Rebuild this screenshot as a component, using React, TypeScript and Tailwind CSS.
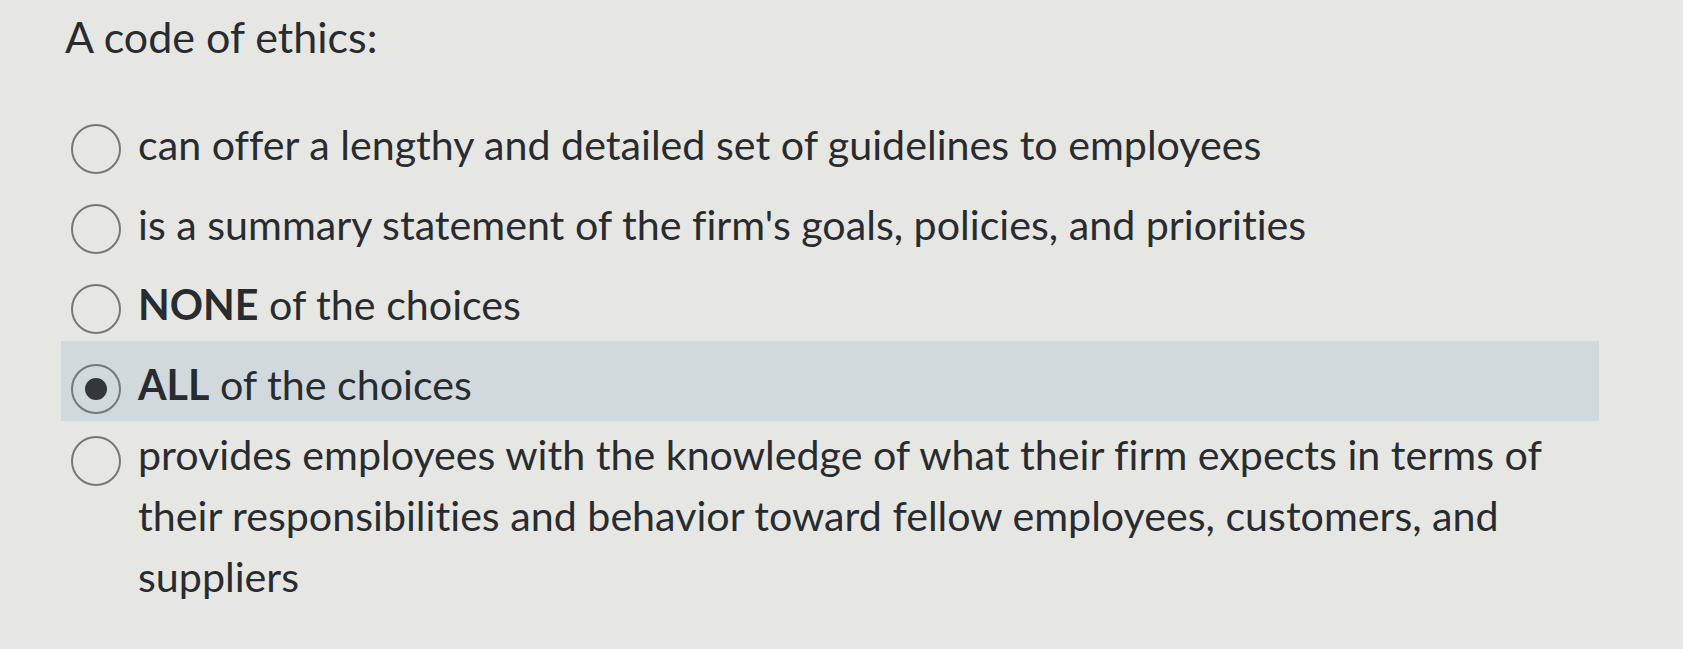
import React from 'react';

interface Choice {
  lead?: string;
  text: string;
  selected?: boolean;
}

const choices: Choice[] = [
  { text: 'can offer a lengthy and detailed set of guidelines to employees' },
  { text: "is a summary statement of the firm's goals, policies, and priorities" },
  { lead: 'NONE', text: ' of the choices' },
  { lead: 'ALL', text: ' of the choices', selected: true },
  {
    text: 'provides employees with the knowledge of what their firm expects in terms of their responsibilities and behavior toward fellow employees, customers, and suppliers',
  },
];

const Radio = ({ checked, className }: { checked?: boolean; className: string }) => (
  <span
    className={`flex h-[50px] w-[50px] shrink-0 items-center justify-center rounded-full border-2 border-[#757779] ${className}`}
  >
    {checked && <span className="h-[22px] w-[22px] rounded-full bg-[#33363a]" />}
  </span>
);

export default function App() {
  return (
    <div className="min-h-[649px] w-full bg-[#e6e7e3] font-['Lato','Noto_Sans',sans-serif] text-[41.2px] leading-[58px] text-[#282c30] [font-variant-ligatures:none]">
      <h1 className="pl-[65px] pt-[8px] text-[43px] font-normal">A code of ethics:</h1>

      <div className="ml-[61px] mt-[35px] w-[1538px]">
        {choices.map((c, i) => {
          const last = i === choices.length - 1;
          return (
            <div
              key={i}
              className={`flex items-start pl-[10px] ${
                last ? 'pt-[3px]' : 'h-[80px] pt-[14px]'
              } ${c.selected ? 'bg-[#d1d9dc]' : ''}`}
            >
              <Radio checked={c.selected} className={last ? 'mt-[12px]' : 'mt-[9px]'} />
              <p className={`ml-[17px] pr-[20px] ${last ? 'leading-[61px]' : ''}`}>
                {c.lead && <span className="font-bold">{c.lead}</span>}
                {c.text}
              </p>
            </div>
          );
        })}
      </div>
    </div>
  );
}
